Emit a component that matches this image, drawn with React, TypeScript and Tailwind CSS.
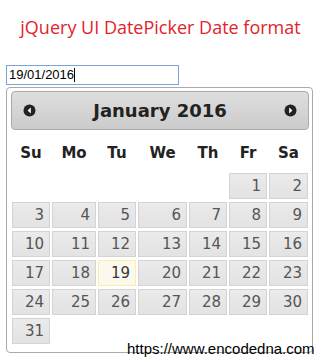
import React from 'react';

const DAY_NAMES = ['Su', 'Mo', 'Tu', 'We', 'Th', 'Fr', 'Sa'];

// January 2016 starts on a Friday
const days: (number | null)[] = [null, null, null, null, null, ...Array.from({ length: 31 }, (_, i) => i + 1)];

const NavIcon = ({ dir }: { dir: 'prev' | 'next' }) => (
  <svg width="13" height="13" viewBox="0 0 13 13">
    <circle cx="6.5" cy="6.5" r="6" fill="#222" />
    {dir === 'prev' ? (
      <polygon points="7.8,3.6 7.8,9.4 4.6,6.5" fill="#fff" />
    ) : (
      <polygon points="5.2,3.6 5.2,9.4 8.4,6.5" fill="#fff" />
    )}
  </svg>
);

export default function App() {
  return (
    <div className="relative w-[321px] h-[361px] bg-white overflow-hidden">
      {/* Title */}
      <h1 className="pt-[14px] h-[65px] text-center text-[18px] leading-[26px] text-[#e2232b] font-['Open_Sans',sans-serif]">
        jQuery UI DatePicker Date format
      </h1>

      {/* Input */}
      <div className="ml-[6px] w-[173px] h-[20px] border border-[#7aa3d6] flex items-center pl-[2px] font-['Liberation_Sans',Arial,sans-serif] text-[13px] text-black">
        <span>19/01/2016</span>
        <span className="w-px h-[14px] bg-black" />
      </div>

      {/* Datepicker */}
      <div className="ml-[6px] mt-[2px] w-[307px] h-[266px] border border-[#aaaaaa] rounded-[4px] bg-white px-[3px] pt-[3px] font-['DejaVu_Sans',Verdana,sans-serif]">
        <div className="h-[39px] ml-px border border-[#aaaaaa] rounded-[4px] bg-[linear-gradient(#dedede,#cbcbcb)] flex items-center justify-between px-[11px]">
          <NavIcon dir="prev" />
          <span className="text-[18px] font-bold text-[#222222]">January 2016</span>
          <NavIcon dir="next" />
        </div>

        <div className="ml-[2px] mt-[3px]">
          <div className="grid grid-cols-[38px_44px_38px_49px_38px_38px_39px] gap-x-[2px] h-[40px] items-center">
            {DAY_NAMES.map(d => (
              <span key={d} className="text-center text-[15px] font-bold text-[#222222]">
                {d}
              </span>
            ))}
          </div>

          <div className="grid grid-cols-[38px_44px_38px_49px_38px_38px_39px] gap-x-[2px] gap-y-[3px] auto-rows-[26px]">
            {days.map((d, i) =>
              d === null ? (
                <span key={i} />
              ) : (
                <span
                  key={i}
                  className={
                    d === 19
                      ? 'border border-[#fcefa1] bg-[#fbf9ee] text-[#363636] text-right pr-[5px] text-[15px] leading-[24px]'
                      : 'border border-[#d3d3d3] bg-[linear-gradient(#ebebeb,#e6e6e6_50%,#e3e3e3)] text-[#555555] text-right pr-[5px] text-[15px] leading-[24px]'
                  }
                >
                  {d}
                </span>
              )
            )}
          </div>
        </div>
      </div>

      {/* Footer link text */}
      <span className="absolute left-[127px] top-[341px] bg-transparent text-[15px] leading-[16px] text-black font-['Liberation_Sans',Arial,sans-serif]">
        https://www.encodedna.com
      </span>
    </div>
  );
}
